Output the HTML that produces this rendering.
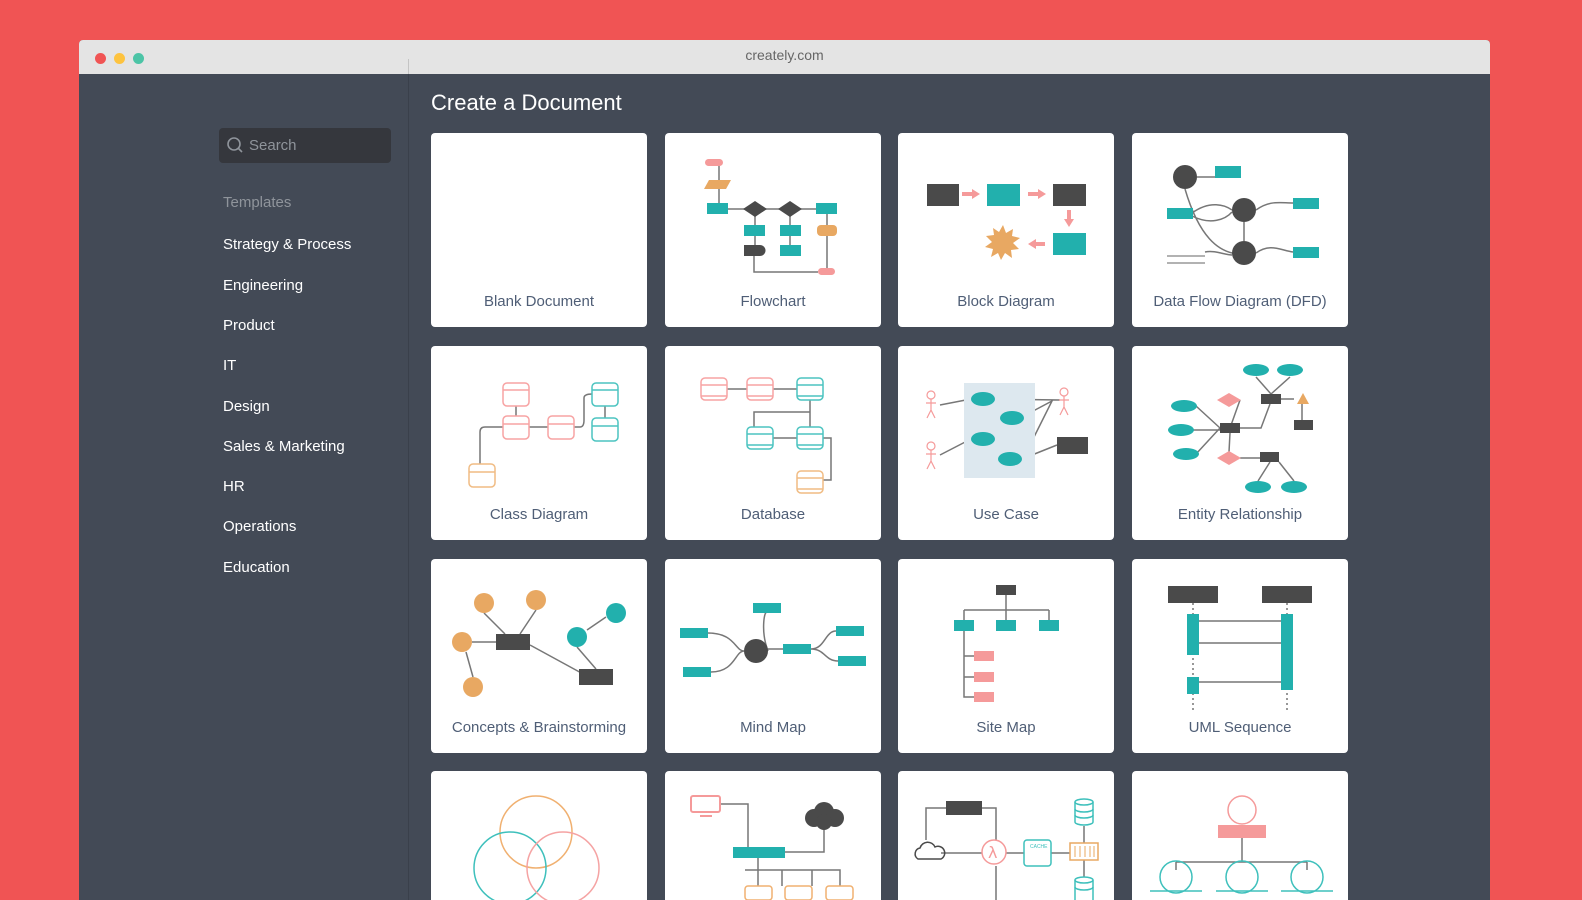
<!DOCTYPE html>
<html><head><meta charset="utf-8"><style>
*{margin:0;padding:0;box-sizing:border-box}
html,body{width:1582px;height:900px;overflow:hidden}
body{background:#f05454;position:relative;font-family:"Liberation Sans",sans-serif}
.win{position:absolute;left:79px;top:40px;width:1411px;height:860px;background:#434a56;border-radius:4px 4px 0 0;overflow:hidden}
.bar{position:absolute;left:0;top:0;width:100%;height:34px;background:#e4e4e4;text-align:center;font-size:14px;color:#666;line-height:31px}
.dot{position:absolute;top:13px;width:11px;height:11px;border-radius:50%}
.div{position:absolute;left:329px;top:34px;width:1px;height:900px;background:#3a404b}
.div2{position:absolute;left:329px;top:19px;width:1px;height:15px;background:#c4c4c4}
.search{position:absolute;left:140px;top:88px;width:172px;height:35px;background:#35373d;border-radius:4px;color:#8f949b;font-size:15px;line-height:35px;padding-left:30px}
.nav{position:absolute;left:144px;color:#fff;font-size:15px}
.title{position:absolute;left:352px;top:50px;color:#fff;font-size:22px}
.card{position:absolute;width:216px;height:194px;background:#fff;border-radius:4px}
.card span{position:absolute;left:0;right:0;top:160px;text-align:center;color:#4f5e76;font-size:15px}
svg.o{position:absolute;left:0;top:0}
</style></head><body>
<div class="win">
<div class="bar">creately.com
<div class="dot" style="left:16px;background:#f05454"></div>
<div class="dot" style="left:35px;background:#fdc33f"></div>
<div class="dot" style="left:54px;background:#4cc4a6"></div>
</div>
<div class="div2"></div>
<div class="div"></div>
<div class="search">Search</div>
<svg style="position:absolute;left:147px;top:96px" width="20" height="20"><circle cx="8" cy="8" r="6" fill="none" stroke="#8f949b" stroke-width="1.6"/><line x1="12.5" y1="12.5" x2="16" y2="16" stroke="#8f949b" stroke-width="1.6"/></svg>
<div class="nav" style="top:154px;color:#8f949b">Templates</div>
<div class="nav" style="top:196px">Strategy &amp; Process</div>
<div class="nav" style="top:237px">Engineering</div>
<div class="nav" style="top:277px">Product</div>
<div class="nav" style="top:317px">IT</div>
<div class="nav" style="top:358px">Design</div>
<div class="nav" style="top:398px">Sales &amp; Marketing</div>
<div class="nav" style="top:438px">HR</div>
<div class="nav" style="top:478px">Operations</div>
<div class="nav" style="top:519px">Education</div>
<div class="title">Create a Document</div>
</div>

<div class="card" style="left:431px;top:133px"><span>Blank Document</span></div>
<div class="card" style="left:665px;top:133px"><span>Flowchart</span></div>
<div class="card" style="left:898px;top:133px"><span>Block Diagram</span></div>
<div class="card" style="left:1132px;top:133px"><span>Data Flow Diagram (DFD)</span></div>
<div class="card" style="left:431px;top:346px"><span>Class Diagram</span></div>
<div class="card" style="left:665px;top:346px"><span>Database</span></div>
<div class="card" style="left:898px;top:346px"><span>Use Case</span></div>
<div class="card" style="left:1132px;top:346px"><span>Entity Relationship</span></div>
<div class="card" style="left:431px;top:559px"><span>Concepts &amp; Brainstorming</span></div>
<div class="card" style="left:665px;top:559px"><span>Mind Map</span></div>
<div class="card" style="left:898px;top:559px"><span>Site Map</span></div>
<div class="card" style="left:1132px;top:559px"><span>UML Sequence</span></div>
<div class="card" style="left:431px;top:771px;height:129px;border-radius:4px 4px 0 0"></div>
<div class="card" style="left:665px;top:771px;height:129px;border-radius:4px 4px 0 0"></div>
<div class="card" style="left:898px;top:771px;height:129px;border-radius:4px 4px 0 0"></div>
<div class="card" style="left:1132px;top:771px;height:129px;border-radius:4px 4px 0 0"></div>

<svg class="o" width="1582" height="900">
<g stroke="#777" stroke-width="1.5" fill="none">
<path d="M719 166V203M728 209H816M755 209V256M790 209V256M754 256V272H818M827 214V268"/>
<path d="M1197 177H1215M1192 213C1210 200 1225 205 1232 210M1192 216C1210 225 1225 220 1232 212M1256 210C1270 200 1280 203 1293 203M1256 253C1270 243 1280 250 1293 252M1244 222V241M1185 189C1200 240 1220 250 1232 253M1205 252C1215 250 1225 255 1232 255"/>
<path d="M1167 256H1205M1167 263H1205" stroke="#999"/>
<path d="M516 406V416M503 427H485Q480 427 480 432V464M529 427H548M574 427H580Q584 427 584 420V398Q584 394 592 394M605 406V418"/>
<path d="M727 389H747M773 389H797M810 400V427M754 427V412H810M773 438H797M823 438H831V480H823"/>
<path d="M940 405L971 399M940 455L971 439M1023 459L1052 401L1020 418M1022 459L1057 445M1060 400L995 399"/>
<path d="M1256 377L1271 394M1290 377L1271 394M1281 399H1294M1240 400L1230 428M1196 406L1220 428M1193 430H1220M1196 454L1220 428M1240 428H1261L1270 404M1230 433L1229 452M1240 458H1260M1270 462L1258 481M1279 462L1294 481M1302 404V420"/>
<path d="M484 613L505 634M536 610L520 634M472 642H496M473 677L466 652M530 645L585 675M577 647L596 669M587 630L606 617"/>
<path d="M708 633C735 633 735 651 744 651M711 672C735 672 735 651 744 651M768 651C760 630 765 608 767 613M768 649H783M811 649C825 649 825 631 836 631M811 649C825 649 825 661 838 661"/>
<path d="M1006 595V610M964 610H1049M964 610V620M1006 610V620M1049 610V620M964 631V697H974M964 656H974M964 677H974"/>
<path d="M1193 603V710M1287 603V710" stroke-dasharray="2 3"/>
<path d="M1198 621H1281M1198 643H1281M1198 682H1281"/>
<path d="M720 804H748V847M785 852H824V826M758 858V886M745 870H840V886M782 870V886M812 870V886"/>
<path d="M946 808H926V840M982 808H996V840M941 853H982M1006 853H1024M1051 853H1070M1084 826V843M996 866V900M1084 860V877"/>
<path d="M1242 838V862M1176 862H1307M1176 862V870M1307 862V870"/>
</g>
<rect x="705" y="159" width="18" height="7" rx="3.5" fill="#f59a9a"/>
<polygon points="704,189 709,180 731,180 726,189" fill="#e8a862"/>
<rect x="707" y="203" width="21" height="11" fill="#22b0ad"/>
<polygon points="743,209 755,201 767,209 755,217" fill="#4a4a4a"/>
<polygon points="778,209 790,201 802,209 790,217" fill="#4a4a4a"/>
<rect x="816" y="203" width="21" height="11" fill="#22b0ad"/>
<rect x="744" y="225" width="21" height="11" fill="#22b0ad"/>
<rect x="780" y="225" width="21" height="11" fill="#22b0ad"/>
<rect x="817" y="225" width="20" height="11" rx="4" fill="#e8a862"/>
<path d="M744 245H760A5.5 5.5 0 0 1 760 256H744Z" fill="#4a4a4a"/>
<rect x="780" y="245" width="21" height="11" fill="#22b0ad"/>
<rect x="818" y="268" width="17" height="7" rx="3.5" fill="#f59a9a"/>
<rect x="927" y="184" width="32" height="22" fill="#4a4a4a"/>
<rect x="987" y="184" width="33" height="22" fill="#22b0ad"/>
<rect x="1053" y="184" width="33" height="22" fill="#4a4a4a"/>
<rect x="1053" y="233" width="33" height="22" fill="#22b0ad"/>
<g fill="#f59a9a"><path d="M962 192H972V189L980 194L972 199V196H962Z"/><path d="M1028 192H1038V189L1046 194L1038 199V196H1028Z"/><path d="M1067 210H1071V219H1074L1069 227L1064 219H1067Z"/><path d="M1045 242H1036V239L1028 244L1036 249V246H1045Z"/></g>
<polygon fill="#e8a862" points="1003,225 1006,233 1013,229 1012,236 1020,238 1013,243 1019,249 1011,250 1012,258 1005,253 1001,260 998,253 991,257 993,249 985,247 992,242 986,236 994,235 993,228 999,232"/>
<circle cx="1185" cy="177" r="12" fill="#4a4a4a"/><circle cx="1244" cy="210" r="12" fill="#4a4a4a"/><circle cx="1244" cy="253" r="12" fill="#4a4a4a"/>
<g fill="#22b0ad"><rect x="1215" y="166" width="26" height="12"/><rect x="1167" y="208" width="26" height="11"/><rect x="1293" y="198" width="26" height="11"/><rect x="1293" y="247" width="26" height="11"/></g>
<g fill="#fff" stroke-width="1.5">
<g stroke="#f7a3a3"><rect x="503" y="383" width="26" height="23" rx="4"/><path d="M503 390H529"/><rect x="503" y="416" width="26" height="23" rx="4"/><path d="M503 424H529"/><rect x="548" y="416" width="26" height="23" rx="4"/><path d="M548 424H574"/>
<rect x="701" y="378" width="26" height="22" rx="4"/><path d="M701 385H727M701 396H727"/><rect x="747" y="378" width="26" height="22" rx="4"/><path d="M747 385H773M747 396H773"/></g>
<g stroke="#4cc4c0"><rect x="592" y="383" width="26" height="23" rx="4"/><path d="M592 390H618"/><rect x="592" y="418" width="26" height="23" rx="4"/><path d="M592 426H618"/>
<rect x="797" y="378" width="26" height="22" rx="4"/><path d="M797 385H823M797 396H823"/><rect x="747" y="427" width="26" height="22" rx="4"/><path d="M747 434H773M747 445H773"/><rect x="797" y="427" width="26" height="22" rx="4"/><path d="M797 434H823M797 445H823"/></g>
<g stroke="#f0bc84"><rect x="469" y="464" width="26" height="23" rx="4"/><path d="M469 472H495"/><rect x="797" y="471" width="26" height="22" rx="4"/><path d="M797 478H823M797 489H823"/></g>
</g>
<rect x="964" y="383" width="71" height="95" fill="#dde8ef"/>
<g fill="#22b0ad"><ellipse cx="983" cy="399" rx="12" ry="7"/><ellipse cx="1012" cy="418" rx="12" ry="7"/><ellipse cx="983" cy="439" rx="12" ry="7"/><ellipse cx="1010" cy="459" rx="12" ry="7"/></g>
<rect x="1057" y="437" width="31" height="17" fill="#4a4a4a"/>
<g stroke="#f59a9a" fill="none" stroke-width="1.2"><circle cx="931" cy="395" r="4"/><path d="M931 399V410L927 418M931 410L935 418M926 403H936"/><circle cx="931" cy="446" r="4"/><path d="M931 450V461L927 469M931 461L935 469M926 454H936"/><circle cx="1064" cy="392" r="4"/><path d="M1064 396V407L1060 415M1064 407L1068 415M1059 400H1069"/></g>
<g fill="#22b0ad"><ellipse cx="1256" cy="370" rx="13" ry="6"/><ellipse cx="1290" cy="370" rx="13" ry="6"/><ellipse cx="1184" cy="406" rx="13" ry="6"/><ellipse cx="1181" cy="430" rx="13" ry="6"/><ellipse cx="1186" cy="454" rx="13" ry="6"/><ellipse cx="1258" cy="487" rx="13" ry="6"/><ellipse cx="1294" cy="487" rx="13" ry="6"/></g>
<g fill="#4a4a4a"><rect x="1261" y="394" width="20" height="10"/><rect x="1220" y="423" width="20" height="10"/><rect x="1294" y="420" width="19" height="10"/><rect x="1260" y="452" width="19" height="10"/></g>
<polygon fill="#f59a9a" points="1217,400 1229,393 1241,400 1229,407"/><polygon fill="#f59a9a" points="1217,458 1229,451 1241,458 1229,465"/>
<polygon fill="#e8a862" points="1303,393 1309,404 1297,404"/>
<g fill="#e8a862"><circle cx="484" cy="603" r="10"/><circle cx="536" cy="600" r="10"/><circle cx="462" cy="642" r="10"/><circle cx="473" cy="687" r="10"/></g>
<g fill="#22b0ad"><circle cx="616" cy="613" r="10"/><circle cx="577" cy="637" r="10"/></g>
<g fill="#4a4a4a"><rect x="496" y="634" width="34" height="16"/><rect x="579" y="669" width="34" height="16"/></g>
<circle cx="756" cy="651" r="12" fill="#4a4a4a"/>
<g fill="#22b0ad"><rect x="753" y="603" width="28" height="10"/><rect x="680" y="628" width="28" height="10"/><rect x="683" y="667" width="28" height="10"/><rect x="783" y="644" width="28" height="10"/><rect x="836" y="626" width="28" height="10"/><rect x="838" y="656" width="28" height="10"/></g>
<rect x="996" y="585" width="20" height="10" fill="#4a4a4a"/>
<g fill="#22b0ad"><rect x="954" y="620" width="20" height="11"/><rect x="996" y="620" width="20" height="11"/><rect x="1039" y="620" width="20" height="11"/></g>
<g fill="#f59a9a"><rect x="974" y="651" width="20" height="10"/><rect x="974" y="672" width="20" height="10"/><rect x="974" y="692" width="20" height="10"/></g>
<g fill="#4a4a4a"><rect x="1168" y="586" width="50" height="17"/><rect x="1262" y="586" width="50" height="17"/></g>
<g fill="#22b0ad"><rect x="1187" y="614" width="12" height="41"/><rect x="1281" y="614" width="12" height="76"/><rect x="1187" y="677" width="12" height="17"/></g>
<g fill="none" stroke-width="1.5"><circle cx="536" cy="832" r="36" stroke="#f0b070"/><circle cx="510" cy="868" r="36" stroke="#3ec0bc"/><circle cx="563" cy="868" r="36" stroke="#f5a3a3"/></g>
<rect x="691" y="796" width="29" height="16" rx="2" fill="none" stroke="#f59a9a" stroke-width="2"/><path d="M700 816H712" stroke="#f59a9a" stroke-width="2"/>
<g fill="#4a4a4a"><circle cx="814" cy="818" r="9"/><circle cx="824" cy="812" r="10"/><circle cx="835" cy="818" r="9"/><circle cx="824" cy="822" r="8"/></g>
<rect x="733" y="847" width="52" height="11" fill="#22b0ad"/>
<g fill="none" stroke="#f0b070" stroke-width="1.5"><rect x="745" y="886" width="27" height="14" rx="3"/><rect x="785" y="886" width="27" height="14" rx="3"/><rect x="826" y="886" width="27" height="14" rx="3"/></g>
<rect x="946" y="801" width="36" height="14" fill="#4a4a4a"/>
<path d="M918 859a6 6 0 0 1 2-11a8 8 0 0 1 15-1a6 6 0 0 1 6 12z" fill="none" stroke="#4a4a4a" stroke-width="1.5"/>
<circle cx="994" cy="852" r="12" fill="none" stroke="#f59a9a" stroke-width="1.5"/><text x="988" y="858" font-size="16" fill="#f59a9a" font-family="DejaVu Sans">λ</text>
<rect x="1024" y="840" width="27" height="26" rx="3" fill="none" stroke="#3ec0bc" stroke-width="1.5"/><text x="1030" y="848" font-size="5" fill="#3ec0bc">CACHE</text>
<rect x="1070" y="843" width="28" height="17" fill="none" stroke="#e8a862" stroke-width="1.5"/><path d="M1075 846V857M1080 846V857M1085 846V857M1090 846V857M1094 846V857" stroke="#e8a862"/>
<g fill="none" stroke="#3ec0bc" stroke-width="1.5"><path d="M1075 802V822A9 3 0 0 0 1093 822V802"/><ellipse cx="1084" cy="802" rx="9" ry="3"/><path d="M1075 809A9 3 0 0 0 1093 809M1075 815A9 3 0 0 0 1093 815"/><path d="M1075 880V900M1093 880V900"/><ellipse cx="1084" cy="880" rx="9" ry="3"/><path d="M1075 887A9 3 0 0 0 1093 887"/></g>
<circle cx="1242" cy="810" r="14" fill="none" stroke="#f59a9a" stroke-width="1.5"/>
<rect x="1218" y="825" width="48" height="13" fill="#f59a9a"/>
<g fill="none" stroke="#3ec0bc" stroke-width="1.5"><circle cx="1176" cy="877" r="16"/><circle cx="1242" cy="877" r="16"/><circle cx="1307" cy="877" r="16"/><path d="M1150 891H1202M1216 891H1268M1281 891H1333"/></g>
</svg>
</body></html>
